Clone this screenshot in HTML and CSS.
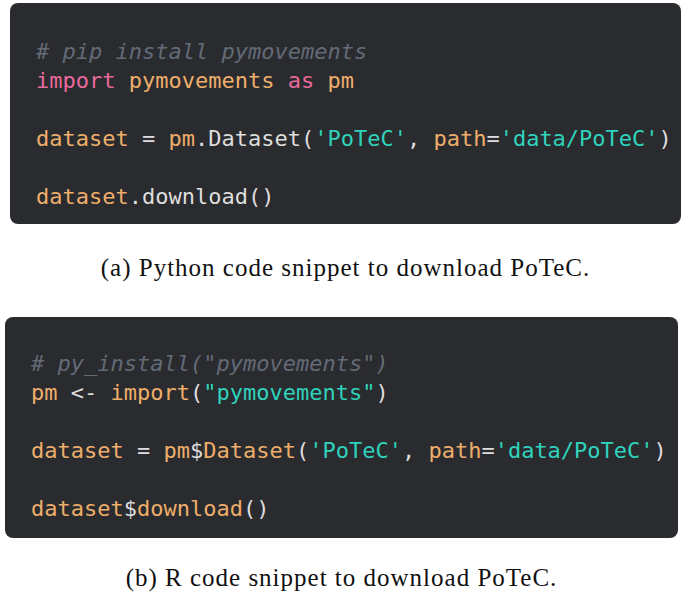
FILE: index.html
```html
<!DOCTYPE html>
<html>
<head>
<meta charset="utf-8">
<link rel="stylesheet" href="styles.css">
</head>
<body>
<div class="page">
  <figure class="fig fig-a">
    <pre class="code"><span class="c"># pip install pymovements</span>
<span class="k">import</span> <span class="o">pymovements</span> <span class="k">as</span> <span class="o">pm</span>

<span class="o">dataset</span> = <span class="o">pm</span>.Dataset(<span class="s">'PoTeC'</span>, <span class="o">path</span>=<span class="s">'data/PoTeC'</span>)

<span class="o">dataset</span>.download()</pre>
    <figcaption class="cap cap-a">(a) Python code snippet to download PoTeC.</figcaption>
  </figure>
  <figure class="fig fig-b">
    <pre class="code"><span class="c"># py_install("pymovements")</span>
<span class="o">pm</span> &lt;- <span class="o">import</span>(<span class="s">"pymovements"</span>)

<span class="o">dataset</span> = <span class="o">pm</span>$<span class="o">Dataset</span>(<span class="s">'PoTeC'</span>, <span class="o">path</span>=<span class="s">'data/PoTeC'</span>)

<span class="o">dataset</span>$<span class="o">download</span>()</pre>
    <figcaption class="cap cap-b">(b) R code snippet to download PoTeC.</figcaption>
  </figure>
</div>
</body>
</html>
```
FILE: styles.css
```css
html, body {
  margin: 0;
  padding: 0;
  background: #ffffff;
}
.page {
  width: 685px;
  height: 594px;
  overflow: hidden;
  display: flex;
  flex-direction: column;
}
.fig {
  margin: 0;
  display: flex;
  flex-direction: column;
}
.fig-a {
  padding: 3px 4px 0 10px;
}
.fig-b {
  padding: 34px 7px 0 5px;
}
.code {
  margin: 0;
  background: #2a2b2e;
  border-radius: 8px;
  font-family: "DejaVu Sans Mono", monospace;
  font-size: 22px;
  line-height: 29px;
  color: #dedede;
  white-space: pre;
  height: 221px;
  box-sizing: border-box;
}
.fig-a .code {
  padding: 34px 0 0 26px;
}
.fig-b .code {
  padding: 32px 0 0 26px;
}
.c { color: #636a77; font-style: italic; }
.k { color: #e8699b; }
.o { color: #eeae6b; }
.s { color: #2fd3bd; }
.cap {
  font-family: "Liberation Serif", serif;
  font-size: 25px;
  letter-spacing: 1px;
  color: #111;
  text-align: center;
  line-height: 30px;
}
.cap-a {
  margin-top: 29px;
}
.cap-b {
  margin-top: 25px;
}
```
